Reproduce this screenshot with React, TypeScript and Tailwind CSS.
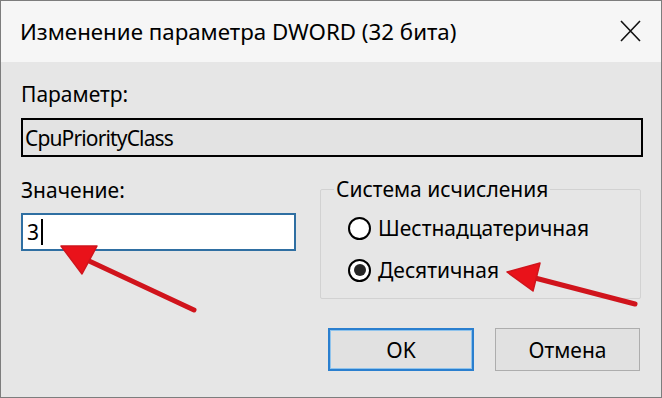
import React from 'react';

const FONT = "font-['Noto_Sans','Liberation_Sans',sans-serif]";

function CloseIcon() {
  return (
    <svg width="21" height="22" viewBox="0 0 21 22" fill="none" className="-mt-[2px]">
      <path d="M1 1 L20 21 M20 1 L1 21" stroke="#111" strokeWidth="1.6" />
    </svg>
  );
}

function Radio({ checked, label }: { checked?: boolean; label: string }) {
  return (
    <div className="flex h-[26px] items-center gap-[7px]">
      <span className="flex h-[23px] w-[23px] items-center justify-center rounded-full border-2 border-black bg-white">
        {checked && <span className="h-[12px] w-[12px] rounded-full bg-[#262626]" />}
      </span>
      <span>{label}</span>
    </div>
  );
}

// red annotation arrows lying over the dialog
function Arrows() {
  return (
    <svg className="pointer-events-none absolute inset-0" width="662" height="398" viewBox="0 0 662 398">
      <g stroke="#d0141c" fill="#e9121a" strokeLinejoin="round">
        <line x1="86" y1="259" x2="193" y2="309" strokeWidth="5" strokeLinecap="round" />
        <polygon points="60,245 96,245 81,273" strokeWidth="1.5" />
        <line x1="534" y1="277" x2="634" y2="303" strokeWidth="5" strokeLinecap="round" />
        <polygon points="506,271 539,262 532,290" strokeWidth="1.5" />
      </g>
    </svg>
  );
}

export default function App() {
  return (
    <div className={`relative flex h-[398px] w-[662px] flex-col overflow-hidden border border-[#7d7d7d] text-[21px] leading-[26px] text-black ${FONT}`}>
      {/* title bar */}
      <div className="flex h-[61px] shrink-0 items-center justify-between bg-[#f6f6f6] pl-[19px] pr-[20px]">
        <span className="text-[22.3px]">Изменение параметра DWORD (32 бита)</span>
        <CloseIcon />
      </div>

      {/* body */}
      <div className="flex flex-1 flex-col bg-[#e6e6e6] pl-[20px] pr-[18px] pt-[19px]">
        <div>Параметр:</div>
        <div className="mt-[11px] flex h-[39px] items-center border-2 border-black bg-[#e3e3e3] pl-[2px] tracking-[-0.85px]">
          CpuPriorityClass
        </div>

        <div className="mt-[19px] flex">
          <div className="w-[275px] pt-[1px]">
            <div>Значение:</div>
            <div className="mt-[10px] flex h-[38px] items-center border-2 border-[#2f6fa2] bg-white pl-[4px]">
              <span>3</span>
              <span className="ml-[2px] h-[26px] w-[2px] bg-black" />
            </div>
          </div>

          <fieldset className="ml-[24px] h-[123px] w-[321px] rounded-[2px] border border-[#d2d2d2] pl-[27px]">
            <legend className="-ml-[14px] px-[2px]">Система исчисления</legend>
            <div className="mt-[13px] flex flex-col gap-[16px]">
              <Radio label="Шестнадцатеричная" />
              <Radio checked label="Десятичная" />
            </div>
          </fieldset>
        </div>

        <div className="mt-[29px] flex justify-end gap-[21px] pr-[3px]">
          <button className="flex h-[43px] w-[146px] items-center justify-center border-2 border-[#2a7fcf] bg-[#e1e1e1] shadow-[inset_0_0_0_1px_#8fc3ec]">
            OK
          </button>
          <button className="flex h-[43px] w-[145px] items-center justify-center border border-[#adadad] bg-[#e1e1e1]">
            Отмена
          </button>
        </div>
      </div>

      <Arrows />
    </div>
  );
}
